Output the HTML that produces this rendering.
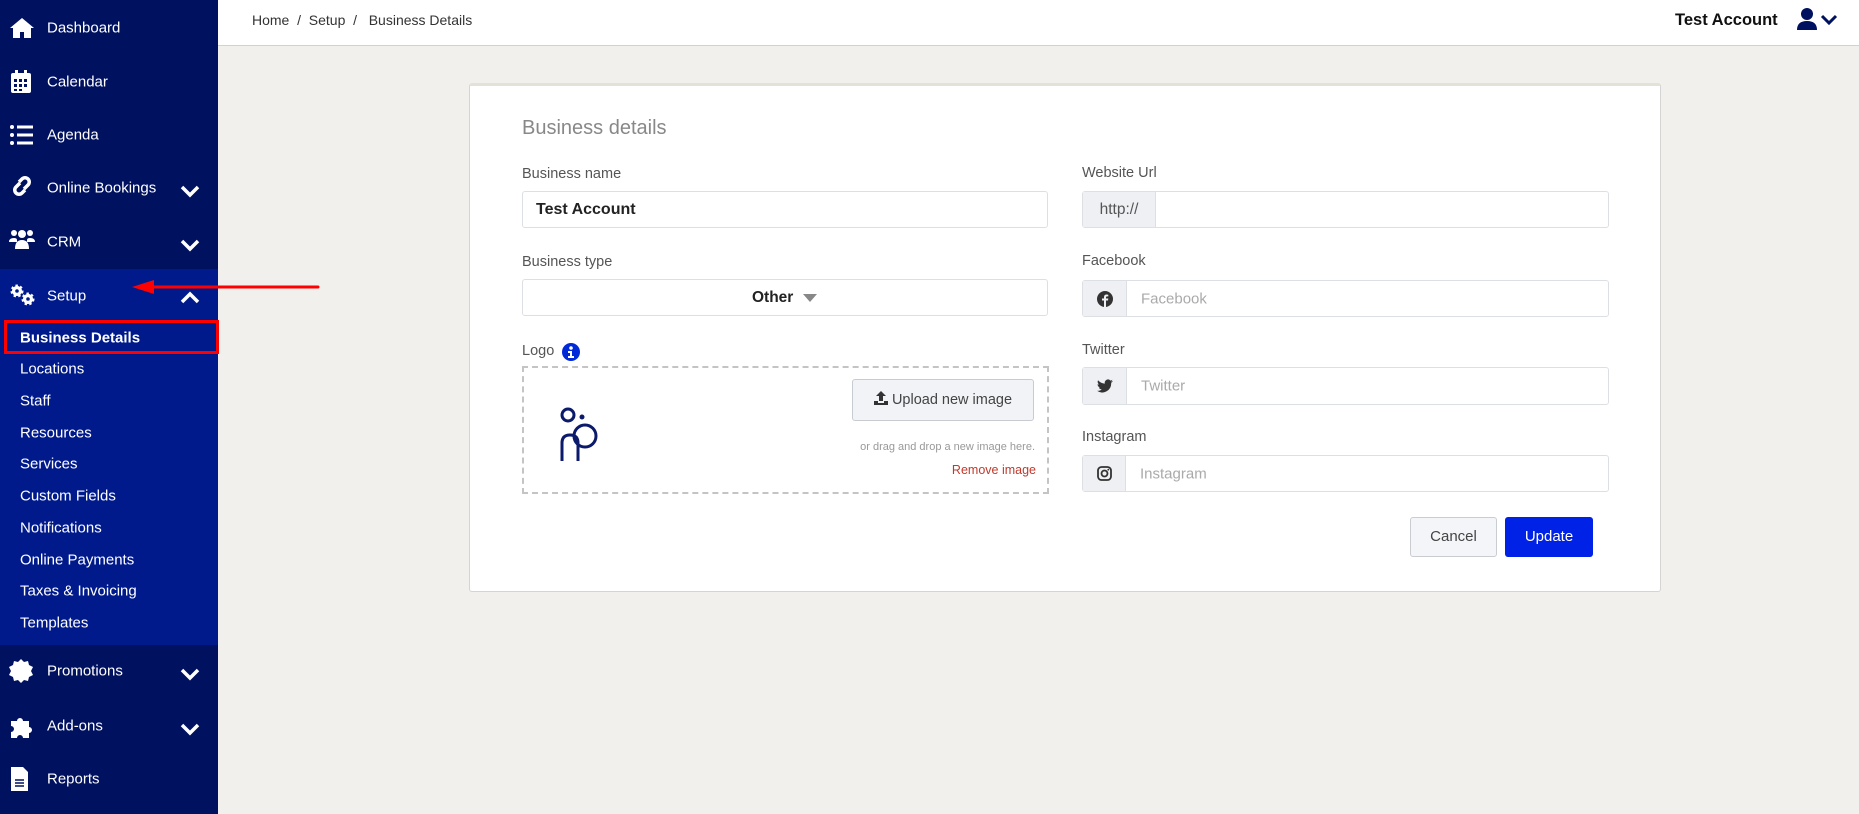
<!DOCTYPE html>
<html><head><meta charset="utf-8"><style>
*{box-sizing:border-box;margin:0;padding:0}
body{width:1859px;height:814px;overflow:hidden;background:#f1f0ec;font-family:"Liberation Sans",sans-serif;position:relative}
.a{position:absolute}
#sb{left:0;top:0;width:218px;height:814px;background:#00115f}
#sub{left:0;top:269px;width:218px;height:376px;background:#001a8c}
.ni{position:absolute;left:47px;color:#fff;font-size:15px;transform:translateY(-50%)}
.ic{position:absolute;left:9px;width:26px;height:24px;transform:translateY(-50%)}
.si{position:absolute;left:20px;color:#fff;font-size:15px;transform:translateY(-50%)}
.chev{position:absolute;left:180px;transform:translateY(-50%)}
#hd{left:218px;top:0;width:1641px;height:46px;background:#fff;border-bottom:1px solid #cfd3d8}
.lbl{position:absolute;font-size:14.5px;color:#555;transform:translateY(-50%)}
.inp{position:absolute;background:#fff;border:1px solid #dcdfe3;border-radius:3px}
.add{position:absolute;left:0;top:0;bottom:0;background:#eef0f3;border-right:1px solid #dcdfe3;display:flex;align-items:center;justify-content:center;color:#555;font-size:15.5px}
.ph{position:absolute;top:50%;transform:translateY(-50%);color:#aaa;font-size:15px}
</style></head><body>
<div id="sb" class="a"></div>
<div id="sub" class="a"></div>
<svg class="ic" style="top:28px" viewBox="0 0 26 24"><path d="M13 2L1 12h3v10h7v-6h4v6h7V12h3z" fill="#fff"/></svg>
<svg class="ic" style="top:82px" viewBox="0 0 26 24"><rect x="2" y="3" width="20" height="20" rx="2" fill="#fff"/><rect x="6" y="0" width="3" height="5" fill="#fff"/><rect x="15" y="0" width="3" height="5" fill="#fff"/><g fill="#00115f"><rect x="5" y="9" width="3" height="3"/><rect x="10" y="9" width="3" height="3"/><rect x="15" y="9" width="3" height="3"/><rect x="5" y="14" width="3" height="3"/><rect x="10" y="14" width="3" height="3"/><rect x="15" y="14" width="3" height="3"/><rect x="5" y="19" width="3" height="2"/><rect x="10" y="19" width="3" height="2"/></g></svg>
<svg class="ic" style="top:135px" viewBox="0 0 26 24"><g fill="#fff"><circle cx="3" cy="4" r="2"/><circle cx="3" cy="12" r="2"/><circle cx="3" cy="20" r="2"/><rect x="8" y="2.5" width="16" height="3"/><rect x="8" y="10.5" width="16" height="3"/><rect x="8" y="18.5" width="16" height="3"/></g></svg>
<svg class="ic" style="top:186px" viewBox="0 0 26 24"><g fill="none" stroke="#fff" stroke-width="3.5"><path d="M11 9l-4 4a4 4 0 006 6l3-3"/><path d="M15 15l4-4a4 4 0 00-6-6l-3 3"/></g></svg>
<svg class="ic" style="top:240px" viewBox="0 0 26 24"><g fill="#fff"><circle cx="5" cy="5" r="3"/><circle cx="13" cy="6" r="4"/><circle cx="21" cy="5" r="3"/><path d="M0 14q0-4 5-4 3 0 3 2v2zM26 14q0-4-5-4-3 0-3 2v2zM6 21q0-9 7-9t7 9z"/></g></svg>
<svg class="ic" style="top:295px" viewBox="0 0 26 24"><g fill="#fff" stroke="#fff" stroke-width="3" stroke-dasharray="2.2 2.2"><circle cx="8" cy="8" r="5"/><circle cx="19" cy="16" r="5"/></g><g fill="#fff"><circle cx="8" cy="8" r="5"/><circle cx="19" cy="16" r="5"/></g><circle cx="8" cy="8" r="1.8" fill="#001a8c"/><circle cx="19" cy="16" r="1.8" fill="#001a8c"/></svg>
<svg class="ic" style="top:671px" viewBox="0 0 26 24"><path d="M12 0l3 3 4-1 1 4 4 2-2 4 2 4-4 2-1 4-4-1-3 3-3-3-4 1-1-4-4-2 2-4-2-4 4-2 1-4 4 1z" fill="#fff"/></svg>
<svg class="ic" style="top:726px" viewBox="0 0 26 24"><path d="M2 7h6a3 3 0 116 0h6v6a3 3 0 110 6v5h-6a3 3 0 10-6 0H2v-6a3 3 0 100-6z" fill="#fff"/></svg>
<svg class="ic" style="top:779px" viewBox="0 0 26 24"><path d="M2 0h12l5 5v19H2z" fill="#fff"/><g stroke="#00115f" stroke-width="1.5"><path d="M6 13h9M6 16h9M6 19h9"/></g></svg>
<div class="ni" style="top:28px">Dashboard</div>
<div class="ni" style="top:82px">Calendar</div>
<div class="ni" style="top:135px">Agenda</div>
<div class="ni" style="top:188px">Online Bookings</div>
<div class="ni" style="top:242px">CRM</div>
<div class="ni" style="top:296px">Setup</div>
<div class="ni" style="top:671px">Promotions</div>
<div class="ni" style="top:726px">Add-ons</div>
<div class="ni" style="top:779px">Reports</div>
<svg class="chev" style="top:191px" width="20" height="14" viewBox="0 0 20 14"><path d="M2 3l8 8 8-8" fill="none" stroke="#fff" stroke-width="3.5"/></svg>
<svg class="chev" style="top:245px" width="20" height="14" viewBox="0 0 20 14"><path d="M2 3l8 8 8-8" fill="none" stroke="#fff" stroke-width="3.5"/></svg>
<svg class="chev" style="top:298px" width="20" height="14" viewBox="0 0 20 14"><path d="M2 11l8-8 8 8" fill="none" stroke="#fff" stroke-width="3.5"/></svg>
<svg class="chev" style="top:674px" width="20" height="14" viewBox="0 0 20 14"><path d="M2 3l8 8 8-8" fill="none" stroke="#fff" stroke-width="3.5"/></svg>
<svg class="chev" style="top:729px" width="20" height="14" viewBox="0 0 20 14"><path d="M2 3l8 8 8-8" fill="none" stroke="#fff" stroke-width="3.5"/></svg>
<div class="a" style="left:4px;top:320px;width:215px;height:34px;border:3px solid #f00;"></div>
<div class="si" style="top:338px;font-weight:bold">Business Details</div>
<div class="si" style="top:369px">Locations</div>
<div class="si" style="top:401px">Staff</div>
<div class="si" style="top:433px">Resources</div>
<div class="si" style="top:464px">Services</div>
<div class="si" style="top:496px">Custom Fields</div>
<div class="si" style="top:528px">Notifications</div>
<div class="si" style="top:560px">Online Payments</div>
<div class="si" style="top:591px">Taxes &amp; Invoicing</div>
<div class="si" style="top:623px">Templates</div>
<svg class="a" style="left:130px;top:278px" width="192" height="18" viewBox="0 0 192 18"><path d="M20 9h168" stroke="#f00" stroke-width="3" stroke-linecap="round"/><path d="M2 9l22-7v14z" fill="#f00"/></svg>
<div id="hd" class="a"></div>
<div class="a" style="left:252px;top:12px;font-size:14px;color:#333">Home &nbsp;/&nbsp; Setup &nbsp;/&nbsp; &nbsp;Business Details</div>
<div class="a" style="left:1675px;top:11px;font-size:16.5px;font-weight:bold;color:#111">Test Account</div>
<svg class="a" style="left:1797px;top:6px" width="44" height="26" viewBox="0 0 44 26"><circle cx="10" cy="8" r="6" fill="#00115f"/><path d="M0 24q0-9 10-9t10 9z" fill="#00115f"/><path d="M25 10l7 7 7-7" fill="none" stroke="#00115f" stroke-width="3"/></svg>
<div class="a" style="left:469px;top:83px;width:1192px;height:509px;background:#fff;border:1px solid #d4d4d4;border-top:3px solid #e3e1d8;border-radius:3px"></div>
<div class="a" style="left:522px;top:117px;font-size:20px;color:#888">Business details</div>
<div class="lbl" style="left:522px;top:174px">Business name</div>
<div class="inp" style="left:522px;top:191px;width:526px;height:37px"><span class="a" style="left:13px;top:9px;font-size:16px;font-weight:bold;color:#222">Test Account</span></div>
<div class="lbl" style="left:522px;top:262px">Business type</div>
<div class="inp" style="left:522px;top:279px;width:526px;height:37px"><span class="a" style="left:229px;top:9px;font-size:15.5px;font-weight:bold;color:#222">Other</span><svg class="a" style="left:280px;top:14px" width="14" height="9"><path d="M0 0h14L7 8z" fill="#888"/></svg></div>
<div class="lbl" style="left:522px;top:351px">Logo</div>
<svg class="a" style="left:562px;top:343px" width="18" height="18"><circle cx="9" cy="9" r="9" fill="#0029d8"/><circle cx="9" cy="5" r="1.8" fill="#fff"/><path d="M6 8h4v5h2v2H6v-2h2v-3H6z" fill="#fff"/></svg>
<div class="a" style="left:522px;top:366px;width:527px;height:128px;border:2px dashed #c4c4c4"></div>
<svg class="a" style="left:558px;top:405px" width="50" height="58" viewBox="0 0 50 58"><g fill="none" stroke="#0b1a6b" stroke-width="3"><circle cx="10" cy="10" r="6"/><circle cx="27" cy="31" r="11"/><path d="M4 56V38q0-8 8-8t8 8v18"/></g><circle cx="24" cy="12" r="2.5" fill="#0b1a6b"/></svg>
<div class="a" style="left:852px;top:379px;width:182px;height:42px;background:#f1f3f6;border:1px solid #c8ccd2;border-radius:3px;font-size:14.5px;color:#444;text-align:center;line-height:40px"><svg width="14" height="14" viewBox="0 0 14 14" style="vertical-align:-1px"><path d="M7 0L2 5h3v5h4V5h3zM0 10h4v2h6v-2h4v4H0z" fill="#333"/></svg> Upload new image</div>
<div class="a" style="left:800px;top:441px;width:235px;text-align:right;font-size:11px;color:#999">or drag and drop a new image here.</div>
<div class="a" style="left:800px;top:463px;width:236px;text-align:right;font-size:12.5px;color:#c0392b">Remove image</div>
<div class="lbl" style="left:1082px;top:173px">Website Url</div>
<div class="inp" style="left:1082px;top:191px;width:527px;height:37px"><div class="add" style="width:73px">http://</div></div>
<div class="lbl" style="left:1082px;top:261px">Facebook</div>
<div class="inp" style="left:1082px;top:280px;width:527px;height:37px"><div class="add" style="width:44px"><svg width="16" height="16"><circle cx="8" cy="8" r="8" fill="#333"/><path d="M9 16V9.5h2l.3-2H9V6.3q0-.9 1-.9h1.3V3.7Q10.6 3.5 9.8 3.5 7 3.5 7 6.2v1.3H5v2h2V16z" fill="#eef0f3"/></svg></div><span class="ph" style="left:58px">Facebook</span></div>
<div class="lbl" style="left:1082px;top:350px">Twitter</div>
<div class="inp" style="left:1082px;top:367px;width:527px;height:38px"><div class="add" style="width:44px"><svg width="16" height="14" viewBox="0 0 16 14"><path d="M16 2a6 6 0 01-2 .5A3 3 0 0015.4.8a6 6 0 01-2 .8 3.2 3.2 0 00-5.5 3A9 9 0 011.1 1.2a3.2 3.2 0 001 4.3 3 3 0 01-1.5-.4 3.2 3.2 0 002.6 3.2 3 3 0 01-1.4 0 3.2 3.2 0 003 2.2A6.5 6.5 0 010 11.8 9 9 0 0014.2 4.2V3.8A6 6 0 0016 2z" fill="#333"/></svg></div><span class="ph" style="left:58px">Twitter</span></div>
<div class="lbl" style="left:1082px;top:437px">Instagram</div>
<div class="inp" style="left:1082px;top:455px;width:527px;height:37px"><div class="add" style="width:43px"><svg width="15" height="15"><rect x="1" y="1" width="13" height="13" rx="3.5" fill="none" stroke="#333" stroke-width="1.8"/><circle cx="7.5" cy="7.5" r="3" fill="none" stroke="#333" stroke-width="1.8"/><circle cx="11.3" cy="3.7" r=".9" fill="#333"/></svg></div><span class="ph" style="left:57px">Instagram</span></div>
<div class="a" style="left:1410px;top:517px;width:87px;height:40px;background:#f3f5f8;border:1px solid #c9ccd1;border-radius:3px;text-align:center;line-height:38px;font-size:15px;color:#444">Cancel</div>
<div class="a" style="left:1505px;top:517px;width:88px;height:40px;background:#0021e6;border-radius:3px;text-align:center;line-height:40px;font-size:15px;color:#fff">Update</div>
</body></html>
